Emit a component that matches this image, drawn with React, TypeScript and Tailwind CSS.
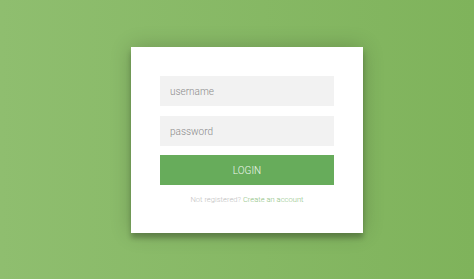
export default function App() {
  return (
    <div className="flex h-[279px] w-full justify-start bg-gradient-to-r from-[#8fbe6f] to-[#7fb35b] pl-[131px] pt-[47px] font-['Roboto',sans-serif]">
      <div className="flex h-[186px] w-[232px] flex-col items-center bg-white px-[29px] pt-[29px] shadow-[0_0_20px_rgba(0,0,0,0.2),0_5px_5px_rgba(0,0,0,0.24)]">
        <input
          type="text"
          placeholder="username"
          className="h-[30px] w-full bg-[#f2f2f2] px-[10px] text-[10px] font-light text-[#555] outline-none placeholder:text-[#8a8a8a]"
        />
        <input
          type="password"
          placeholder="password"
          className="mt-[10px] h-[30px] w-full bg-[#f2f2f2] px-[10px] text-[10px] font-light text-[#555] outline-none placeholder:text-[#8a8a8a]"
        />
        <button className="mt-[9px] h-[30px] w-full bg-[#67ac5b] text-[10px] font-light uppercase text-[#eef6ec]">
          Login
        </button>
        <p className="mt-[9px] text-[7.6px] font-light text-[#bdbdbd]">
          Not registered? <a className="text-[#8ec282]">Create an account</a>
        </p>
      </div>
    </div>
  )
}
